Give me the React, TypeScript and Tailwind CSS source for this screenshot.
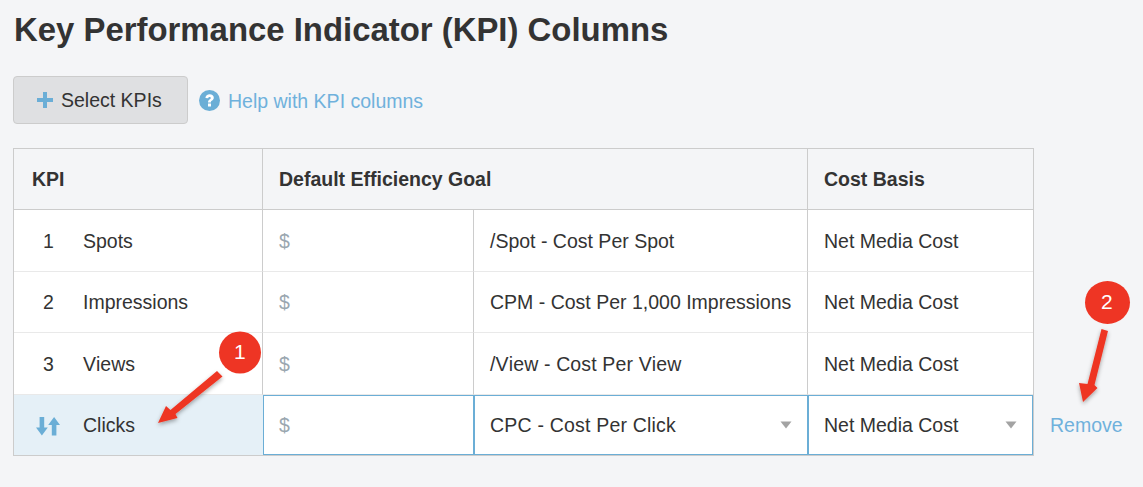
import React from "react";

function Arrow({ d }: { d: string }) {
  return <path d={d} fill="#ee3524" />;
}

const Cell = ({ children, className = "" }: { children?: React.ReactNode; className?: string }) => (
  <div className={`flex items-center min-w-0 whitespace-nowrap pt-[2px] [font-kerning:none] ${className}`}>{children}</div>
);

const Caret = () => (
  <svg width="12" height="8" viewBox="0 0 12 8" className="absolute right-[15px] top-[25px]">
    <path d="M0.5 0.5H11.5L6 7.5Z" fill="#a3a3a3" />
  </svg>
);

const rows = [
  ["1", "Spots", "/Spot - Cost Per Spot", ""],
  ["2", "Impressions", "CPM - Cost Per 1,000 Impressions", ""],
  ["3", "Views", "/View - Cost Per View", "tracking-[0.14px]"],
];

export default function App() {
  return (
    <div className="relative w-[1143px] h-[487px] overflow-hidden bg-[#f4f5f7] font-['Liberation_Sans',Arial,sans-serif] text-[19.5px] text-[#333333] pl-[13px] pt-[11px]">
      <h1 className="text-[32.9px] leading-[38px] font-bold pl-px text-[#333333]">
        Key Performance Indicator (KPI) Columns
      </h1>

      <div className="flex items-center mt-[27px] h-[48px]">
        <button className="flex items-center w-[175px] h-[48px] pl-[23px] rounded-[4px] border border-[#cccccc] bg-[#dfe0e2] text-[#333333]">
          <svg width="16" height="16" viewBox="0 0 16 16" className="mr-[8px]">
            <path d="M6 0H10V6H16V10H10V16H6V10H0V6H6Z" fill="#6baed6" />
          </svg>
          <span className="relative top-px">Select KPIs</span>
        </button>
        <svg width="21" height="21" viewBox="0 0 21 21" className="ml-[11px] mr-[8px]">
          <circle cx="10.5" cy="10.5" r="10.5" fill="#6baed6" />
          <path d="M6.4 8C6.5 5.6 8.3 4.2 10.7 4.2C13 4.2 14.8 5.6 14.8 7.7C14.8 9.3 13.8 10 12.8 10.7C12 11.2 11.9 11.6 11.9 12.5H9C9 10.9 9.5 10.2 10.6 9.4C11.3 8.9 11.8 8.6 11.8 8C11.8 7.3 11.3 6.9 10.6 6.9C9.8 6.9 9.3 7.4 9.2 8.2ZM9 13.4H12V16.4H9Z" fill="#ffffff" />
        </svg>
        <a className="text-[#6fb1dc] relative top-[2px]">Help with KPI columns</a>
      </div>

      <div className="mt-[24px] w-[1021px] grid grid-cols-[249px_211px_334px_225px] grid-rows-[61px_62px_61px_62px_60px] border border-[#cccccc] bg-white">
        <Cell className="bg-[#f4f5f7] border-b border-r border-[#cccccc] font-bold pl-[18px]">KPI</Cell>
        <Cell className="col-span-2 bg-[#f4f5f7] border-b border-r border-[#cccccc] font-bold pl-[16px]">Default Efficiency Goal</Cell>
        <Cell className="bg-[#f4f5f7] border-b border-[#cccccc] font-bold pl-[16px]">Cost Basis</Cell>

        {rows.map(([n, name, goal, track]) => (
          <React.Fragment key={n}>
            <Cell className="border-b border-r border-b-[#e9e9e9] border-r-[#cccccc]">
              <span className="w-[69px] text-center">{n}</span>
              {name}
            </Cell>
            <Cell className="border-b border-r border-b-[#e9e9e9] border-r-[#cccccc] pl-[16px] text-[#9aa7b0]">$</Cell>
            <Cell className={`border-b border-r border-b-[#e9e9e9] border-r-[#cccccc] pl-[16px] ${track}`}>{goal}</Cell>
            <Cell className="border-b border-b-[#e9e9e9] pl-[16px]">Net Media Cost</Cell>
          </React.Fragment>
        ))}

        <Cell className="bg-[#e5f0f7]">
          <span className="w-[68px] flex justify-center">
            <svg width="24" height="20" viewBox="0 0 24 20">
              <path d="M3.6 1H8.2V11.5H11.8L5.9 19.5L0 11.5H3.6Z" fill="#6baed6" />
              <path d="M15.8 19.5H20.4V9H24L18.1 1L12.2 9H15.8Z" fill="#6baed6" />
            </svg>
          </span>
          <span className="ml-px">Clicks</span>
        </Cell>
        <Cell className="bg-white border border-[#6baed6] pl-[15px] text-[#9aa7b0]">$</Cell>
        <Cell className="relative bg-white border border-[#6baed6] pl-[15px] tracking-[0.2px]">
          CPC - Cost Per Click
          <Caret />
        </Cell>
        <Cell className="relative bg-white border border-[#6baed6] pl-[15px]">
          Net Media Cost
          <Caret />
        </Cell>
      </div>

      <a className="absolute left-[1050px] top-[411px] text-[#6fb1dc]">Remove</a>

      <svg className="absolute left-0 top-0 pointer-events-none" width="1143" height="487" viewBox="0 0 1143 487">
        <defs>
          <filter id="s" x="-30%" y="-30%" width="160%" height="160%">
            <feDropShadow dx="0" dy="2" stdDeviation="2" floodColor="#000" floodOpacity="0.35" />
          </filter>
        </defs>
        <g filter="url(#s)">
          <Arrow d="M217 371L222.5 376.5L175.5 414L177.5 418L158 423L166 406L170.5 410Z" />
          <Arrow d="M1101.5 329L1108 331L1094.5 385L1097.5 388L1083 402L1079 383L1087.5 384Z" />
        </g>
        <circle cx="240" cy="352.5" r="21" fill="#ee3524" />
        <ellipse cx="1107.5" cy="302.5" rx="22.5" ry="21.5" fill="#ee3524" />
      </svg>
      <span className="absolute left-[234px] top-[338px] text-[21px] leading-[28px] text-white">1</span>
      <span className="absolute left-[1101px] top-[288px] text-[21px] leading-[28px] text-white">2</span>
    </div>
  );
}
